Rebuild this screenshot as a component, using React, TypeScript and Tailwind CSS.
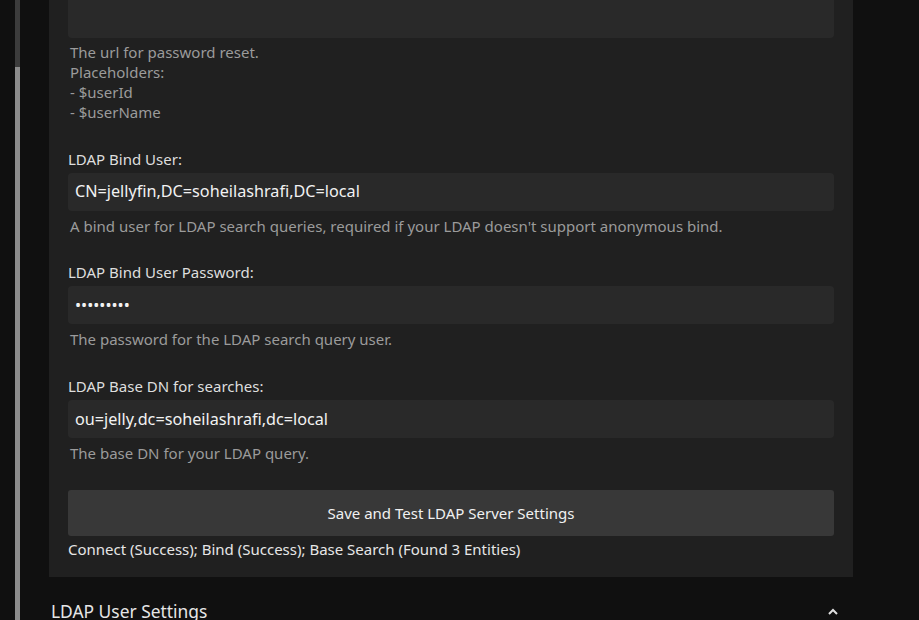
import React from "react"

type Field = {
  label: string
  value: string
  help: string
}

const fields: Field[] = [
  {
    label: "LDAP Bind User:",
    value: "CN=jellyfin,DC=soheilashrafi,DC=local",
    help: "A bind user for LDAP search queries, required if your LDAP doesn't support anonymous bind.",
  },
  {
    label: "LDAP Bind User Password:",
    value: "•••••••••",
    help: "The password for the LDAP search query user.",
  },
  {
    label: "LDAP Base DN for searches:",
    value: "ou=jelly,dc=soheilashrafi,dc=local",
    help: "The base DN for your LDAP query.",
  },
]

function Input({ value }: { value: string }) {
  return (
    <div className="flex h-[38px] items-center rounded-[4px] bg-[#292929] px-[7px] text-[16.2px] text-[#f2f2f2]">
      {value}
    </div>
  )
}

export default function App() {
  return (
    <div
      className="flex h-[620px] w-[919px] overflow-hidden bg-[#101010]"
      style={{ fontFamily: '"Noto Sans", sans-serif' }}
    >
      {/* scrollbar */}
      <div className="ml-[15px] flex w-[5px] flex-col">
        <div className="h-[67px] bg-[#3c3c3c]" />
        <div className="flex-1 bg-[#8c8c8c]" />
      </div>

      <div className="ml-[29px] flex w-[804px] flex-col">
        <div className="bg-[#202020] px-[19px] pb-[18px]">
          <div className="h-[38px] rounded-b-[4px] bg-[#292929]" />
          <div className="mt-[4px] pl-[2px] text-[15px] leading-[20px] text-[#9b9b9b]">
            <div>The url for password reset.</div>
            <div>Placeholders:</div>
            <div>- $userId</div>
            <div>- $userName</div>
          </div>

          {fields.map((f) => (
            <div key={f.label} className="mt-[26.6px]">
              <div className="mb-[4px] text-[15px] leading-[20px] text-[#dedede]">{f.label}</div>
              <Input value={f.value} />
              <div className="mt-[5px] pl-[2px] text-[15px] leading-[20px] text-[#9b9b9b]">{f.help}</div>
            </div>
          ))}

          <button className="mt-[27.4px] flex h-[46px] w-full items-center justify-center rounded-[3px] bg-[#383838] text-[15px] text-[#f0f0f0]">
            Save and Test LDAP Server Settings
          </button>
          <div className="mt-[3px] text-[15px] leading-[20px] text-[#e6e6e6]">
            Connect (Success); Bind (Success); Base Search (Found 3 Entities)
          </div>
        </div>

        <div className="mt-[21px] flex items-center justify-between pl-[2px] pr-[14px]">
          <div className="text-[17.4px] text-[#e6e6e6]">LDAP User Settings</div>
          <svg width="12" height="8" viewBox="0 0 12 8" className="mt-[2px]">
            <path d="M2 6 L6 2 L10 6" fill="none" stroke="#e0e0e0" strokeWidth="2" />
          </svg>
        </div>
      </div>
    </div>
  )
}
